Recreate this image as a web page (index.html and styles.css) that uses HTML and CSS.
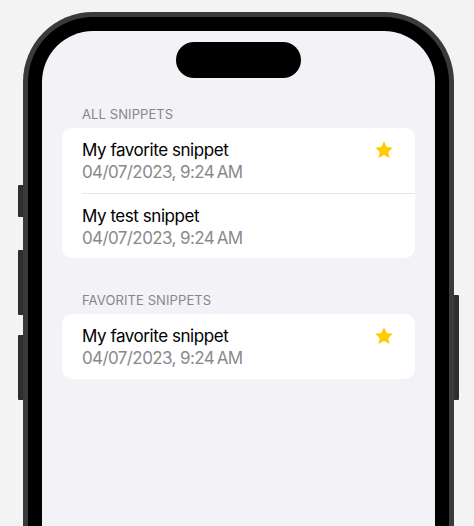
FILE: index.html
```html
<!DOCTYPE html>
<html>
<head>
<meta charset="utf-8">
<link rel="stylesheet" href="styles.css">
</head>
<body>
<div class="phone">
  <div class="side-btn btn-l1"></div>
  <div class="side-btn btn-l2"></div>
  <div class="side-btn btn-l3"></div>
  <div class="side-btn btn-r1"></div>
  <div class="frame">
    <div class="bezel">
      <div class="screen">
        <div class="island"></div>

        <div class="section">
          <div class="section-title">ALL SNIPPETS</div>
          <div class="card">
            <div class="row">
              <div class="row-body">
                <div class="row-text">
                  <div class="title">My favorite snippet</div>
                  <div class="date">04/07/2023, 9:24&#8239;AM</div>
                </div>
                <svg class="star" viewBox="0 0 24 24"><path d="M12 2.4l2.95 6.2 6.75.85-4.95 4.65 1.3 6.7L12 17.5l-6.050 3.3 1.3-6.7L2.3 9.45l6.75-.85z"/></svg>
              </div>
            </div>
            <div class="row">
              <div class="row-body sep">
                <div class="row-text">
                  <div class="title">My test snippet</div>
                  <div class="date">04/07/2023, 9:24&#8239;AM</div>
                </div>
              </div>
            </div>
          </div>
        </div>

        <div class="section section-2">
          <div class="section-title">FAVORITE SNIPPETS</div>
          <div class="card">
            <div class="row">
              <div class="row-body">
                <div class="row-text">
                  <div class="title">My favorite snippet</div>
                  <div class="date">04/07/2023, 9:24&#8239;AM</div>
                </div>
                <svg class="star" viewBox="0 0 24 24"><path d="M12 2.4l2.95 6.2 6.75.85-4.95 4.65 1.3 6.7L12 17.5l-6.05 3.3 1.3-6.7L2.3 9.45l6.75-.85z"/></svg>
              </div>
            </div>
          </div>
        </div>

      </div>
    </div>
  </div>
</div>
</body>
</html>
```

FILE: styles.css
```css
html, body {
  margin: 0;
  padding: 0;
  background: #f3f3f3;
  overflow: hidden;
  height: 526px;
}

body {
  font-family: Inter, "Noto Sans", "Liberation Sans", sans-serif;
}

.phone {
  position: relative;
  width: 431px;
  margin: 12px 0 0 23px;
}

.side-btn {
  position: absolute;
  background: #2e2e30;
  border-radius: 1px;
  width: 6px;
}

.btn-l1 { left: -5px; top: 173px; height: 32px; }
.btn-l2 { left: -5px; top: 238px; height: 65px; }
.btn-l3 { left: -5px; top: 323px; height: 65px; }
.btn-r1 { right: -5px; top: 283px; height: 105px; }

.frame {
  position: relative;
  background: #3a3a3c;
  border-radius: 70px 70px 0 0;
  padding: 5px 5px 0 5px;
}

.bezel {
  background: #000;
  border-radius: 65px 65px 0 0;
  padding: 14px 14px 0 14px;
}

.screen {
  background: #f2f2f7;
  border-radius: 51px 51px 0 0;
  height: 560px;
  padding: 11px 20px 0 20px;
  box-sizing: border-box;
}

.island {
  width: 125px;
  height: 36px;
  border-radius: 18px;
  background: #000;
  margin: 0 auto;
}

.section {
  margin-top: 28px;
}

.section-2 {
  margin-top: 34px;
}

.section-title {
  font-size: 13px;
  line-height: 16px;
  color: #86868b;
  padding-left: 20px;
  margin-bottom: 6px;
  letter-spacing: 0.1px;
}

.card {
  background: #fff;
  border-radius: 10px;
  overflow: hidden;
}

.row {
  padding-left: 20px;
}

.row-body {
  display: flex;
  align-items: flex-start;
  justify-content: space-between;
  padding: 11px 20px 0 0;
  height: 65px;
  box-sizing: border-box;
}

.row-body.sep {
  border-top: 1px solid #e5e5ea;
}

.row-text {
  display: flex;
  flex-direction: column;
}

.title {
  font-size: 17px;
  line-height: 22px;
  color: #000;
  letter-spacing: -0.45px;
}

.date {
  font-size: 17px;
  line-height: 23px;
  color: #8a8a8e;
  letter-spacing: -0.6px;
}

.star {
  width: 22px;
  height: 22px;
  fill: #ffcc00;
  margin-top: 0;
}
```
